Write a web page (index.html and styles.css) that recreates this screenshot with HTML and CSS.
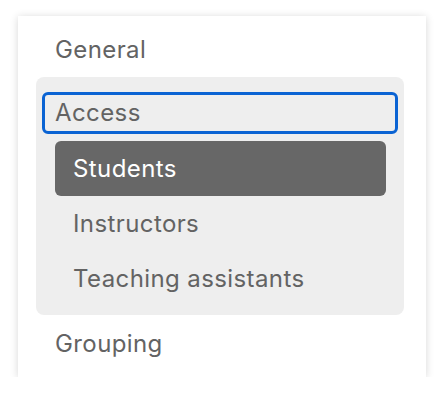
FILE: index.html
```html
<!DOCTYPE html>
<html>
<head>
<meta charset="utf-8">
<link rel="stylesheet" href="styles.css">
</head>
<body>
<nav class="card">
  <div class="item top">General</div>
  <div class="group">
    <div class="access">Access</div>
    <ul class="sublist">
      <li class="sub active">Students</li>
      <li class="sub">Instructors</li>
      <li class="sub">Teaching assistants</li>
    </ul>
  </div>
  <div class="item bottom">Grouping</div>
</nav>
</body>
</html>
```
FILE: styles.css
```css
html, body {
  margin: 0;
  padding: 0;
  background: #ffffff;
}
body {
  padding: 16px 18px 0 18px;
  font-family: Inter, "Liberation Sans", sans-serif;
  font-size: 24px;
  letter-spacing: 0.4px;
  color: #636363;
}
.card {
  width: 408px;
  height: 361px;
  box-sizing: border-box;
  background: #ffffff;
  box-shadow: 0 1px 8px rgba(0, 0, 0, 0.16);
  display: flex;
  flex-direction: column;
}
.item {
  line-height: 29px;
  padding-left: 37px;
}
.item.top {
  padding-top: 19px;
  padding-bottom: 13px;
}
.item.bottom {
  padding-top: 14px;
  padding-bottom: 19px;
}
.group {
  margin: 0 22px 0 18px;
  background: #eeeeee;
  border-radius: 8px;
  padding: 15px 0 9px 0;
}
.access {
  margin: 0 6px;
  border: 3px solid #0a63d3;
  border-radius: 6px;
  line-height: 36px;
  padding-left: 10px;
}
.sublist {
  list-style: none;
  margin: 7px 18px 0 19px;
  padding: 0;
}
.sub {
  height: 55px;
  line-height: 55px;
  padding-left: 18px;
  border-radius: 6px;
}
.sub.active {
  background: #676767;
  color: #ffffff;
}
```
